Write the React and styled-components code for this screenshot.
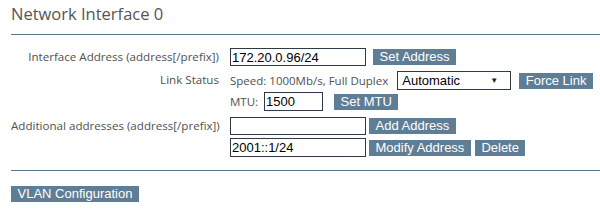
import styled, { createGlobalStyle } from "styled-components";

const GlobalStyle = createGlobalStyle`
    body {
        margin: 0;
        background: #fff;
        font-family: "Open Sans", "Liberation Sans", sans-serif;
    }
`;

const App = () => {
    return (
        <Page>
            <GlobalStyle />
            <Title>Network Interface 0</Title>
            <Rule />

            <Form>
                <Label>Interface Address (address[/prefix])</Label>
                <Cell>
                    <Line>
                        <TextInput defaultValue="172.20.0.96/24" width={136} />
                        <Button gap={7}>Set Address</Button>
                    </Line>
                </Cell>

                <Label top={5}>Link Status</Label>
                <Cell top={5}>
                    <Line tall>
                        <Info space={9}>Speed: 1000Mb/s, Full Duplex</Info>
                        <Select>
                            Automatic
                            <Arrow>▼</Arrow>
                        </Select>
                        <Button gap={8}>Force Link</Button>
                    </Line>
                    <Line tall top={2}>
                        <Info space={6}>MTU:</Info>
                        <TextInput defaultValue="1500" width={59} />
                        <Button gap={11}>Set MTU</Button>
                    </Line>
                </Cell>

                <Label top={6}>Additional addresses (address[/prefix])</Label>
                <Cell top={6}>
                    <Line>
                        <TextInput defaultValue="" width={136} />
                        <Button gap={3}>Add Address</Button>
                    </Line>
                    <Line tall top={3}>
                        <TextInput defaultValue="2001::1/24" width={136} />
                        <Button gap={3}>Modify Address</Button>
                        <Button gap={4}>Delete</Button>
                    </Line>
                </Cell>
            </Form>

            <Rule top={13} />
            <Button section>VLAN Configuration</Button>
        </Page>
    );
}

export default App;

const Page = styled.div`
    padding: 4px 0 0 11px;
`;

const Title = styled.h2`
    margin: 0;
    font-size: 16.5px;
    font-weight: 400;
    line-height: 20px;
    color: #555;
`;

const Rule = styled.div`
    height: 1px;
    background: #5a7589;
    margin-top: ${props => props.top ?? 10}px;
`;

const Form = styled.div`
    display: grid;
    grid-template-columns: 208px auto;
    column-gap: 11px;
    margin-top: 13px;
`;

const Label = styled.div`
    text-align: right;
    font-size: 11.6px;
    line-height: 18px;
    color: #505050;
    white-space: nowrap;
    margin-top: ${props => props.top ?? 0}px;
`;

const Cell = styled.div`
    display: flex;
    flex-direction: column;
    margin-top: ${props => props.top ?? 0}px;
`;

const Line = styled.div`
    display: flex;
    align-items: center;
    height: ${props => props.tall ? 19 : 18}px;
    margin-top: ${props => props.top ?? 0}px;
`;

const Info = styled.span`
    font-size: 11.5px;
    color: #505050;
    white-space: nowrap;
    margin-right: ${props => props.space}px;
`;

const TextInput = styled.input`
    box-sizing: border-box;
    width: ${props => props.width}px;
    height: 100%;
    margin: 0;
    padding: 0 1px;
    border: 1px solid #2e3a48;
    border-radius: 0;
    font-family: "Liberation Sans", Arial, sans-serif;
    font-size: 13px;
    color: #000;
    outline: none;
`;

const Button = styled.button`
    box-sizing: border-box;
    height: 16px;
    margin-left: ${props => props.gap ?? 0}px;
    margin-top: ${props => props.section ? 15 : 0}px;
    padding: 0 6.5px;
    border: none;
    border-radius: 0;
    background: #5f7d95;
    color: #fff;
    font-family: "Liberation Sans", Arial, sans-serif;
    font-size: 13px;
    line-height: 16px;
    cursor: pointer;
    white-space: nowrap;
`;

const Select = styled.div`
    position: relative;
    box-sizing: border-box;
    width: 114px;
    height: 100%;
    padding: 0 0 0 4px;
    border: 1px solid #2e3a48;
    font-family: "Liberation Sans", Arial, sans-serif;
    font-size: 13px;
    line-height: 17px;
    color: #000;
`;

const Arrow = styled.span`
    position: absolute;
    right: 12px;
    top: 0;
    font-size: 8px;
    line-height: 17px;
    color: #222;
`;
